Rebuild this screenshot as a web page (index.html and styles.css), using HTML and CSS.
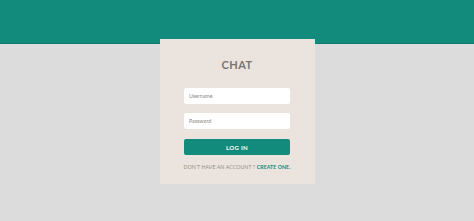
FILE: index.html
```html
<!DOCTYPE html>
<html lang="en">
<head>
<meta charset="UTF-8">
<meta name="viewport" content="width=device-width, initial-scale=1.0">
<title>Chat - Log in</title>
<link rel="stylesheet" href="styles.css">
</head>
<body>
<div class="top-bar"></div>
<div class="login-card">
  <h1>CHAT</h1>
  <form class="login-form">
    <input type="text" placeholder="Username">
    <input type="password" placeholder="Password">
    <button type="button">LOG IN</button>
  </form>
  <p class="signup">DON'T HAVE AN ACCOUNT ? <a href="#">CREATE ONE.</a></p>
</div>
</body>
</html>
```

FILE: styles.css
```css
body {
  margin: 0;
  font-family: Lato, "Liberation Sans", sans-serif;
  background-color: #dcdcdc;
  height: 221px;
  overflow: hidden;
}
.top-bar {
  height: 43px;
  background-color: #128a7c;
  border-bottom: 1px solid #0e7a6d;
}
.login-card {
  position: relative;
  width: 155px;
  height: 145px;
  margin: -5px auto 0;
  background-color: #ebe4de;
  text-align: center;
  box-sizing: border-box;
  padding-top: 19px;
}
h1 {
  margin: 0;
  font-size: 11px;
  line-height: 14px;
  letter-spacing: 0.4px;
  color: #7b7370;
  font-weight: 700;
}
.login-form {
  display: flex;
  flex-direction: column;
  align-items: center;
  gap: 9px;
  margin-top: 16px;
}
.login-form input {
  width: 106px;
  height: 16px;
  box-sizing: border-box;
  border: none;
  border-radius: 2px;
  background: #fff;
  padding: 0 5px;
  font-family: inherit;
  font-size: 5.3px;
  color: #555;
  outline: none;
}
.login-form input::placeholder {
  color: #8a8583;
}
.login-form button {
  width: 106px;
  height: 16px;
  margin-top: 1px;
  border: none;
  border-radius: 2px;
  background-color: #128a7c;
  color: #fff;
  font-family: inherit;
  font-size: 6px;
  font-weight: 700;
  letter-spacing: 0.3px;
  padding: 0;
}
.signup {
  margin: 8px 0 0;
  font-size: 5.2px;
  line-height: 8px;
  color: #948d88;
  letter-spacing: 0.1px;
}
.signup a {
  color: #128a7c;
  font-weight: 700;
  text-decoration: none;
}
```
